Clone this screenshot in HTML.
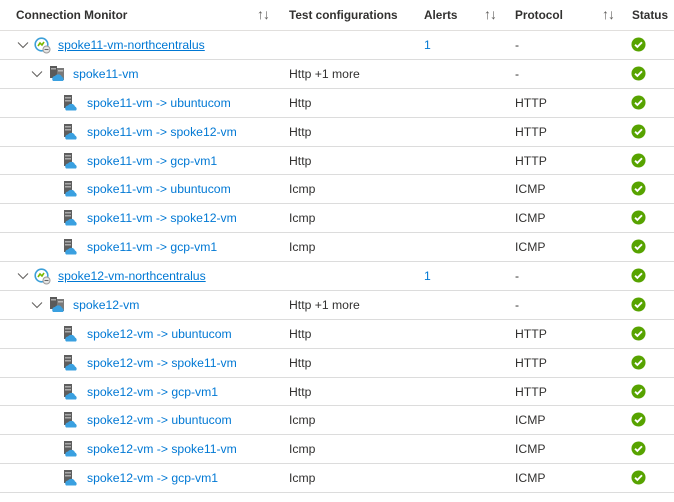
<!DOCTYPE html>
<html><head><meta charset="utf-8">
<style>
*{margin:0;padding:0;box-sizing:border-box}
body{width:674px;height:502px;background:#fff;font-family:"Liberation Sans",sans-serif;font-size:12.2px;color:#323130;position:relative;overflow:hidden}
.hdr{position:absolute;top:0;left:0;width:674px;height:31px;border-bottom:1px solid #e1dfdd;font-weight:bold;color:#323130;font-size:11.8px}
.hdr span{position:absolute;top:8px}
.sort{font-weight:normal;color:#605e5c;font-size:14px;top:6px!important;letter-spacing:-1px}
.row{position:absolute;left:0;width:674px;height:29px;border-bottom:1px solid #dcdcdc}
.row > *{position:absolute}
.t{top:7px}
a{color:#0078d4;text-decoration:none}
a.u{text-decoration:underline}
.chk{left:631px;top:6px}
.chev{top:9px}
</style></head><body>
<div class="hdr">
<span style="left:16px">Connection Monitor</span>
<span class="sort" style="left:257px">↑↓</span>
<span style="left:289px">Test configurations</span>
<span style="left:424px">Alerts</span>
<span class="sort" style="left:484px">↑↓</span>
<span style="left:515px">Protocol</span>
<span class="sort" style="left:602px">↑↓</span>
<span style="left:632px">Status</span>
</div>
<div id="rows"></div>
<script>
const chk='<svg class="chk" width="15" height="15" viewBox="0 0 16 16"><circle cx="8" cy="8" r="7.5" fill="#57a300"/><path d="M4.3 8.2l2.5 2.4 4.9-5" stroke="#fff" stroke-width="2" fill="none"/></svg>';
const chev=(x)=>`<svg class="chev" style="left:${x}px" width="12" height="10" viewBox="0 0 12 10"><path d="M1 2.5l5 5 5-5" stroke="#605e5c" stroke-width="1" fill="none"/></svg>`;
const glob=(x)=>`<svg style="left:${x}px;top:6px" width="17" height="17" viewBox="0 0 17 17"><circle cx="7.5" cy="7.5" r="6.3" fill="#fff" stroke="#3b9fd8" stroke-width="1.6"/><path d="M4 9l2-3 2 2 2-3" stroke="#7ab800" stroke-width="1.6" fill="none"/><circle cx="12.5" cy="12.5" r="3.5" fill="#e5e5e5" stroke="#999"/><path d="M10.5 12.5h4" stroke="#666"/></svg>`;
const srv2=(x)=>`<svg style="left:${x}px;top:5px" width="17" height="17" viewBox="0 0 17 17"><rect x="1" y="1" width="7" height="12" fill="#5a5a5a"/><rect x="8" y="3" width="7" height="12" fill="#7a7a7a"/><rect x="2" y="3" width="5" height="1.5" fill="#aaa"/><rect x="9" y="5" width="5" height="1.5" fill="#bbb"/><path d="M4 16a3 3 0 0 1 2-5 4 4 0 0 1 7 1 2.5 2.5 0 0 1 1 4z" fill="#3aa0e0"/></svg>`;
const srv=(x)=>`<svg style="left:${x}px;top:5px" width="16" height="17" viewBox="0 0 16 17"><rect x="2" y="1" width="8" height="13" fill="#5e5e5e"/><rect x="3" y="3" width="6" height="1.5" fill="#aaa"/><rect x="3" y="6" width="6" height="1.5" fill="#aaa"/><path d="M4 16.5a3 3 0 0 1 2-5 4 4 0 0 1 7 1 2.5 2.5 0 0 1 1 4z" fill="#3aa0e0"/></svg>`;
let rows=[];
for(const [a,b] of [["spoke11","spoke12"],["spoke12","spoke11"]]){
 rows.push(`${chev(17)}${glob(34)}<a class="t u" style="left:58px" href="#">${a}-vm-northcentralus</a><span class="t" style="left:424px;color:#0078d4">1</span><span class="t" style="left:515px">-</span>`);
 rows.push(`${chev(31)}${srv2(49)}<a class="t" style="left:73px">${a}-vm</a><span class="t" style="left:289px">Http +1 more</span><span class="t" style="left:515px">-</span>`);
 for(const p of [["Http","HTTP"],["Icmp","ICMP"]])
  for(const d of ["ubuntucom",b+"-vm","gcp-vm1"])
   rows.push(`${srv(62)}<a class="t" style="left:87px">${a}-vm -&gt; ${d}</a><span class="t" style="left:289px">${p[0]}</span><span class="t" style="left:515px">${p[1]}</span>`);
}
document.getElementById('rows').innerHTML=rows.map((r,i)=>`<div class="row" style="top:${Math.round(31+i*28.875)}px;height:${Math.round(31+(i+1)*28.875)-Math.round(31+i*28.875)}px">${r}${chk}</div>`).join('');
</script>
</body></html>
